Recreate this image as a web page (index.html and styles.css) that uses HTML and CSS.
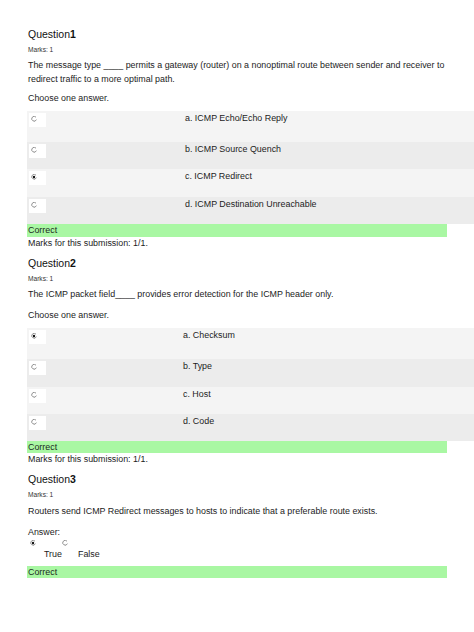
FILE: index.html
```html
<!DOCTYPE html>
<html>
<head>
<meta charset="utf-8">
<link rel="stylesheet" href="styles.css">
</head>
<body>
<div class="page">

  <section class="q q1">
    <h2 class="qhead">Question<b>1</b></h2>
    <div class="marks">Marks: 1</div>
    <p class="qtext">The message type ____ permits a gateway (router) on a nonoptimal route between sender and receiver to redirect traffic to a more optimal path.</p>
    <p class="prompt">Choose one answer.</p>
    <div class="answers col158">
      <div class="opt r0 first"><span class="box"><svg class="radio" viewBox="0 0 6 6"><path d="M5 1.2 A2.4 2.4 0 1 0 5.4 3.6" fill="none" stroke="#777" stroke-width="0.8"/></svg></span><span class="lbl">a. ICMP Echo/Echo Reply</span></div>
      <div class="opt r1"><span class="box"><svg class="radio" viewBox="0 0 6 6"><path d="M5 1.2 A2.4 2.4 0 1 0 5.4 3.6" fill="none" stroke="#777" stroke-width="0.8"/></svg></span><span class="lbl">b. ICMP Source Quench</span></div>
      <div class="opt r0 tall"><span class="box"><svg class="radio" viewBox="0 0 6 6"><path d="M5 1.2 A2.4 2.4 0 1 0 5.4 3.6" fill="none" stroke="#777" stroke-width="0.8"/><circle cx="3" cy="3" r="1.2" fill="#111"/></svg></span><span class="lbl">c. ICMP Redirect</span></div>
      <div class="opt r1"><span class="box"><svg class="radio" viewBox="0 0 6 6"><path d="M5 1.2 A2.4 2.4 0 1 0 5.4 3.6" fill="none" stroke="#777" stroke-width="0.8"/></svg></span><span class="lbl">d. ICMP Destination Unreachable</span></div>
    </div>
    <div class="correct">Correct</div>
    <div class="score">Marks for this submission: 1/1.</div>
  </section>

  <section class="q q2">
    <h2 class="qhead">Question<b>2</b></h2>
    <div class="marks">Marks: 1</div>
    <p class="qtext">The ICMP packet field____ provides error detection for the ICMP header only.</p>
    <p class="prompt">Choose one answer.</p>
    <div class="answers col156">
      <div class="opt r0 first"><span class="box"><svg class="radio" viewBox="0 0 6 6"><path d="M5 1.2 A2.4 2.4 0 1 0 5.4 3.6" fill="none" stroke="#777" stroke-width="0.8"/><circle cx="3" cy="3" r="1.2" fill="#111"/></svg></span><span class="lbl">a. Checksum</span></div>
      <div class="opt r1 tall"><span class="box"><svg class="radio" viewBox="0 0 6 6"><path d="M5 1.2 A2.4 2.4 0 1 0 5.4 3.6" fill="none" stroke="#777" stroke-width="0.8"/></svg></span><span class="lbl">b. Type</span></div>
      <div class="opt r0"><span class="box"><svg class="radio" viewBox="0 0 6 6"><path d="M5 1.2 A2.4 2.4 0 1 0 5.4 3.6" fill="none" stroke="#777" stroke-width="0.8"/></svg></span><span class="lbl">c. Host</span></div>
      <div class="opt r1"><span class="box"><svg class="radio" viewBox="0 0 6 6"><path d="M5 1.2 A2.4 2.4 0 1 0 5.4 3.6" fill="none" stroke="#777" stroke-width="0.8"/></svg></span><span class="lbl">d. Code</span></div>
    </div>
    <div class="correct">Correct</div>
    <div class="score">Marks for this submission: 1/1.</div>
  </section>

  <section class="q q3">
    <h2 class="qhead">Question<b>3</b></h2>
    <div class="marks">Marks: 1</div>
    <p class="qtext">Routers send ICMP Redirect messages to hosts to indicate that a preferable route exists.</p>
    <p class="prompt answer-lbl">Answer:</p>
    <div class="tf">
      <div class="tf-item"><svg class="radio" viewBox="0 0 6 6"><path d="M5 1.2 A2.4 2.4 0 1 0 5.4 3.6" fill="none" stroke="#777" stroke-width="0.8"/><circle cx="3" cy="3" r="1.2" fill="#111"/></svg><span class="tf-lbl">True</span></div>
      <div class="tf-item"><svg class="radio" viewBox="0 0 6 6"><path d="M5 1.2 A2.4 2.4 0 1 0 5.4 3.6" fill="none" stroke="#777" stroke-width="0.8"/></svg><span class="tf-lbl">False</span></div>
    </div>
    <div class="correct last">Correct</div>
  </section>

</div>
</body>
</html>
```

FILE: styles.css
```css
html, body {
  margin: 0;
  padding: 0;
  background: #ffffff;
}

body {
  font-family: "Liberation Sans", Arial, sans-serif;
  color: #1c1c1c;
  font-size: 8.9px;
}

.page {
  padding: 27px 0 0 28px;
}

.qhead {
  margin: 0;
  font-size: 10.5px;
  line-height: 14px;
  font-weight: normal;
  color: #111111;
}

.qhead b {
  font-weight: bold;
}

.marks {
  margin-top: 4px;
  font-size: 6.6px;
  line-height: 10px;
  color: #333333;
}

.qtext {
  margin: 3px 0 0 0;
  line-height: 14px;
  width: 430px;
}

.prompt {
  margin: 5px 0 0 0;
  line-height: 14px;
}

.q2 .prompt {
  margin-top: 7px;
}

.answers {
  margin-top: 6px;
  margin-left: -1px;
  display: flex;
  flex-direction: column;
}

.opt {
  display: grid;
  height: 27px;
  align-items: start;
}

.col158 .opt { grid-template-columns: 158px 1fr; }
.col156 .opt { grid-template-columns: 156px 1fr; }

.opt.first { height: 31px; }
.opt.tall { height: 28px; }

.r0 { background: #f4f4f4; }
.r1 { background: #ececec; }

.box {
  display: block;
  width: 17px;
  height: 14px;
  margin: 2px 0 0 2px;
  background: #ffffff;
  position: relative;
}

.box .radio {
  position: absolute;
  left: 2px;
  top: 3px;
}

.radio {
  width: 6px;
  height: 6px;
  display: block;
}

.lbl {
  line-height: 14px;
  color: #1c1c1c;
}

.correct {
  margin-left: -1px;
  width: 420px;
  height: 13px;
  line-height: 13px;
  background: #a9f7a3;
  color: #1c2a1c;
  padding-left: 1px;
  box-sizing: border-box;
}

.q2 .correct { height: 12px; line-height: 12px; }

.score {
  line-height: 12px;
}

.q2, .q3 {
  margin-top: 7px;
}

.q3 .qtext { margin-top: 4px; }

.answer-lbl {
  margin-top: 7px;
}

.tf {
  display: flex;
  padding-left: 2px;
  margin-top: 1px;
}

.tf-item {
  display: flex;
  flex-direction: column;
}

.tf-item:first-child {
  width: 32px;
}

.tf-lbl {
  margin-top: 2px;
  line-height: 12px;
}

.tf-item:first-child .tf-lbl { padding-left: 14px; }
.tf-item:last-child .tf-lbl { padding-left: 16px; }

.correct.last {
  margin-top: 6px;
  height: 12px;
  line-height: 12px;
}
```
